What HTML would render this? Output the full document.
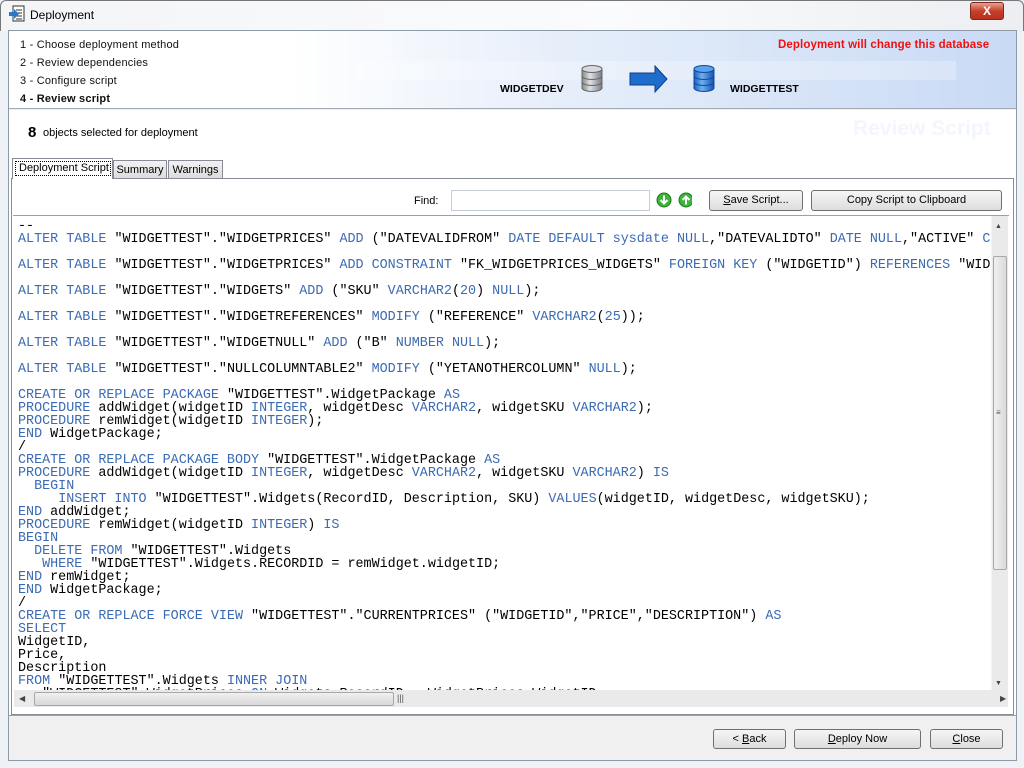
<!DOCTYPE html>
<html><head><meta charset="utf-8"><style>
*{margin:0;padding:0;box-sizing:border-box}
body{width:1024px;height:768px;overflow:hidden;background:#eef1f5;font-family:"Liberation Sans",sans-serif;font-size:12px;position:relative;color:#000}
.abs{position:absolute}
#title{left:0;top:0;width:1024px;height:31px;background:linear-gradient(90deg,#f4f5f7,#fafbfc 60%,#eceef1);border:1px solid #777;border-bottom:none;border-radius:6px 6px 0 0}
#client{left:8px;top:30px;width:1009px;height:731px;background:#f0f0f0;border:1px solid #8e9aa8}
#hdr{left:9px;top:31px;width:1007px;height:78px;background:linear-gradient(90deg,#fff 0%,#fff 28%,#e6eefa 55%,#c9daf5 100%);border-bottom:1px solid #a0a8b4}
.step{left:20px;font-size:11px;color:#111;letter-spacing:0.2px}
.btn{background:linear-gradient(#f6f6f6,#dddddd);border:1px solid #707070;border-radius:3px;text-align:center;font-size:11px;line-height:18px}
#code{left:14px;top:216px;width:977px;height:474px;background:#fff;overflow:hidden;font-family:"Liberation Mono",monospace;font-size:13.4px;line-height:13px;white-space:pre;padding:4px 0 0 4px;color:#000}
.k{color:#3b6bb3}
</style></head><body>
<div id="title" class="abs"></div>
<svg class="abs" style="left:8px;top:5px" width="18" height="18"><rect x="5" y="1" width="11" height="15" fill="#fff" stroke="#333"/><path d="M8 5h6M8 8h6M8 11h6M8 14h6" stroke="#333"/><path d="M1 7h5V4l5 5-5 5v-3H1z" fill="#2a78c8"/></svg>
<div class="abs" style="left:30px;top:8px;font-size:12px">Deployment</div>
<div class="abs" style="left:970px;top:2px;width:34px;height:18px;background:linear-gradient(#e8a090,#c7402a 50%,#b83020);border:1px solid #7a2a20;border-radius:3px;color:#fff;font-weight:bold;text-align:center;line-height:16px;font-size:12px">X</div>
<div id="client" class="abs"></div>
<div id="hdr" class="abs"></div>
<div class="abs" style="left:356px;top:61px;width:600px;height:19px;background:rgba(255,255,255,0.25)"></div>
<div class="abs step" style="top:39px">1 - Choose deployment method</div>
<div class="abs step" style="top:57px">2 - Review dependencies</div>
<div class="abs step" style="top:75px">3 - Configure script</div>
<div class="abs step" style="top:93px;font-weight:bold">4 - Review script</div>
<div class="abs" style="left:778px;top:39px;font-size:11.5px;font-weight:bold;color:#f01010;letter-spacing:0.1px">Deployment will change this database</div>
<div class="abs" style="left:500px;top:83px;font-size:10.5px;font-weight:bold">WIDGETDEV</div>
<div class="abs" style="left:730px;top:83px;font-size:10.5px;font-weight:bold">WIDGETTEST</div>
<svg class="abs" style="left:580px;top:64px" width="24" height="30"><defs><linearGradient id="g1" x1="0" x2="1"><stop offset="0" stop-color="#888"/><stop offset=".4" stop-color="#e0e0e6"/><stop offset="1" stop-color="#7a7a85"/></linearGradient><linearGradient id="g2" x1="0" x2="1"><stop offset="0" stop-color="#1b5fc0"/><stop offset=".4" stop-color="#6fb0f0"/><stop offset="1" stop-color="#1550b0"/></linearGradient></defs><path d="M2 5v19c0 2 5 3.5 10 3.5s10-1.5 10-3.5V5" fill="url(#g1)" stroke="#666"/><ellipse cx="12" cy="5" rx="10" ry="3.5" fill="#d8d8de" stroke="#666"/><path d="M2 12c0 2 5 3.5 10 3.5s10-1.5 10-3.5M2 18c0 2 5 3.5 10 3.5s10-1.5 10-3.5" fill="none" stroke="#666"/></svg>
<svg class="abs" style="left:629px;top:65px" width="40" height="30"><path d="M1 8h25V1l12 13-12 13v-7H1z" fill="#1e6ccc" stroke="#0c3e8a"/></svg>
<svg class="abs" style="left:692px;top:64px" width="24" height="30"><path d="M2 5v19c0 2 5 3.5 10 3.5s10-1.5 10-3.5V5" fill="url(#g2)" stroke="#0d4aa0"/><ellipse cx="12" cy="5" rx="10" ry="3.5" fill="#5aa0ea" stroke="#0d4aa0"/><path d="M2 12c0 2 5 3.5 10 3.5s10-1.5 10-3.5M2 18c0 2 5 3.5 10 3.5s10-1.5 10-3.5" fill="none" stroke="#0d4aa0"/></svg>
<div class="abs" style="left:9px;top:110px;width:1007px;height:605px;background:#fff"></div>
<div class="abs" style="left:28px;top:124px;font-size:15px;font-weight:bold">8</div>
<div class="abs" style="left:43px;top:127px;font-size:11px">objects selected for deployment</div>
<div class="abs" style="left:853px;top:117px;font-size:21px;font-weight:bold;color:#f3f6fc">Review Script</div>
<div class="abs" style="left:11px;top:178px;width:1003px;height:537px;border:1px solid #898c95;background:#fff"></div>
<div class="abs" style="left:12px;top:158px;width:101px;height:21px;border:1px solid #898c95;border-bottom:none;background:#fff"></div>
<div class="abs" style="left:15px;top:161px;width:96px;height:15px;border:1px dotted #000;font-size:11px;line-height:13px;padding-left:3px">Deployment Script</div>
<div class="abs" style="left:113px;top:160px;width:54px;height:19px;border:1px solid #898c95;background:linear-gradient(#f2f2f2,#dcdcdc);font-size:11px;text-align:center;line-height:18px">Summary</div>
<div class="abs" style="left:168px;top:160px;width:55px;height:19px;border:1px solid #898c95;background:linear-gradient(#f2f2f2,#dcdcdc);font-size:11px;text-align:center;line-height:18px">Warnings</div>
<div class="abs" style="left:414px;top:195px;font-size:11px">Find:</div>
<div class="abs" style="left:451px;top:190px;width:199px;height:21px;border:1px solid #c5cdd8;background:#fff"></div>
<svg class="abs" style="left:656px;top:192px" width="36" height="16"><circle cx="8" cy="8" r="7" fill="#3ab43a" stroke="#1d7a1d"/><path d="M8 3.5v8M4.5 8l3.5 3.5L11.5 8" stroke="#fff" stroke-width="2" fill="none"/><circle cx="30" cy="8" r="7" fill="#3ab43a" stroke="#1d7a1d"/><path d="M30 12.5v-8M26.5 8l3.5-3.5L33.5 8" stroke="#fff" stroke-width="2" fill="none"/></svg>
<div class="abs btn" style="left:709px;top:190px;width:94px;height:21px"><u>S</u>ave Script...</div>
<div class="abs btn" style="left:811px;top:190px;width:191px;height:21px">Copy Script to Clipboard</div>
<div class="abs" style="left:13px;top:215px;width:996px;height:1px;background:#a0a0a0"></div>
<div id="code" class="abs">--
<span class="k">ALTER TABLE</span> "WIDGETTEST"."WIDGETPRICES" <span class="k">ADD</span> ("DATEVALIDFROM" <span class="k">DATE DEFAULT</span> <span class="k">sysdate NULL</span>,"DATEVALIDTO" <span class="k">DATE NULL</span>,"ACTIVE" <span class="k">CHAR</span>(1));

<span class="k">ALTER TABLE</span> "WIDGETTEST"."WIDGETPRICES" <span class="k">ADD CONSTRAINT</span> "FK_WIDGETPRICES_WIDGETS" <span class="k">FOREIGN KEY</span> ("WIDGETID") <span class="k">REFERENCES</span> "WIDGETS"

<span class="k">ALTER TABLE</span> "WIDGETTEST"."WIDGETS" <span class="k">ADD</span> ("SKU" <span class="k">VARCHAR2</span>(<span class="k">20</span>) <span class="k">NULL</span>);

<span class="k">ALTER TABLE</span> "WIDGETTEST"."WIDGETREFERENCES" <span class="k">MODIFY</span> ("REFERENCE" <span class="k">VARCHAR2</span>(<span class="k">25</span>));

<span class="k">ALTER TABLE</span> "WIDGETTEST"."WIDGETNULL" <span class="k">ADD</span> ("B" <span class="k">NUMBER NULL</span>);

<span class="k">ALTER TABLE</span> "WIDGETTEST"."NULLCOLUMNTABLE2" <span class="k">MODIFY</span> ("YETANOTHERCOLUMN" <span class="k">NULL</span>);

<span class="k">CREATE OR REPLACE PACKAGE</span> "WIDGETTEST".WidgetPackage <span class="k">AS</span>
<span class="k">PROCEDURE</span> addWidget(widgetID <span class="k">INTEGER</span>, widgetDesc <span class="k">VARCHAR2</span>, widgetSKU <span class="k">VARCHAR2</span>);
<span class="k">PROCEDURE</span> remWidget(widgetID <span class="k">INTEGER</span>);
<span class="k">END</span> WidgetPackage;
/
<span class="k">CREATE OR REPLACE PACKAGE BODY</span> "WIDGETTEST".WidgetPackage <span class="k">AS</span>
<span class="k">PROCEDURE</span> addWidget(widgetID <span class="k">INTEGER</span>, widgetDesc <span class="k">VARCHAR2</span>, widgetSKU <span class="k">VARCHAR2</span>) <span class="k">IS</span>
  <span class="k">BEGIN</span>
     <span class="k">INSERT INTO</span> "WIDGETTEST".Widgets(RecordID, Description, SKU) <span class="k">VALUES</span>(widgetID, widgetDesc, widgetSKU);
<span class="k">END</span> addWidget;
<span class="k">PROCEDURE</span> remWidget(widgetID <span class="k">INTEGER</span>) <span class="k">IS</span>
<span class="k">BEGIN</span>
  <span class="k">DELETE FROM</span> "WIDGETTEST".Widgets
   <span class="k">WHERE</span> "WIDGETTEST".Widgets.RECORDID = remWidget.widgetID;
<span class="k">END</span> remWidget;
<span class="k">END</span> WidgetPackage;
/
<span class="k">CREATE OR REPLACE FORCE VIEW</span> "WIDGETTEST"."CURRENTPRICES" ("WIDGETID","PRICE","DESCRIPTION") <span class="k">AS</span>
<span class="k">SELECT</span>
WidgetID,
Price,
Description
<span class="k">FROM</span> "WIDGETTEST".Widgets <span class="k">INNER JOIN</span>
   "WIDGETTEST".WidgetPrices <span class="k">ON</span> Widgets.RecordID = WidgetPrices.WidgetID</div>
<div class="abs" style="left:991px;top:216px;width:17px;height:474px;background:#eaeaea;border-left:1px solid #f4f4f4"></div>
<div class="abs" style="left:993px;top:256px;width:14px;height:314px;background:linear-gradient(90deg,#f0f0f0,#dadada);border:1px solid #a8a8a8;border-radius:2px"></div>
<div class="abs" style="left:995px;top:223px;font-size:7px;color:#444">▲</div>
<div class="abs" style="left:996px;top:408px;font-size:8px;color:#555">≡</div>
<div class="abs" style="left:995px;top:680px;font-size:7px;color:#444">▼</div>
<div class="abs" style="left:14px;top:690px;width:994px;height:17px;background:#eaeaea"></div>
<div class="abs" style="left:19px;top:694px;font-size:8px;color:#444">◀</div>
<div class="abs" style="left:1000px;top:694px;font-size:8px;color:#444">▶</div>
<div class="abs" style="left:34px;top:692px;width:360px;height:14px;background:linear-gradient(#f0f0f0,#d8d8d8);border:1px solid #a8a8a8;border-radius:2px"></div>
<div class="abs" style="left:397px;top:693px;font-size:9px;color:#555">|||</div>
<div class="abs" style="left:9px;top:715px;width:1007px;height:1px;background:#a0a0a0"></div>
<div class="abs btn" style="left:713px;top:729px;width:73px;height:20px">&lt; <u>B</u>ack</div>
<div class="abs btn" style="left:794px;top:729px;width:127px;height:20px"><u>D</u>eploy Now</div>
<div class="abs btn" style="left:930px;top:729px;width:73px;height:20px"><u>C</u>lose</div>
</body></html>
